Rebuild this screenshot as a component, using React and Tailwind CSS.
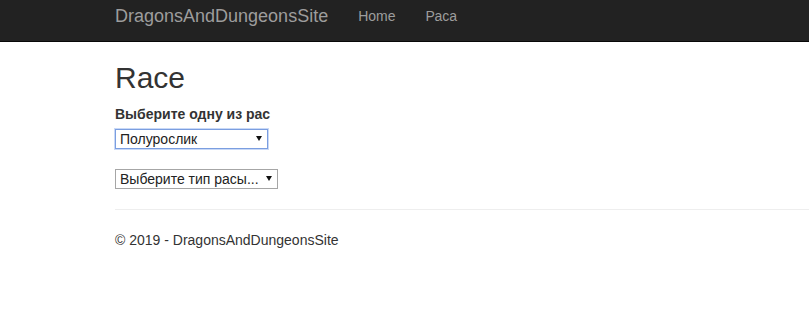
import React from "react";

function Select({ width, focused, children }) {
  return (
    <div className={`relative ${width} h-[20px]`}>
      <select
        className={`appearance-none block w-full h-[20px] bg-white pl-[4px] pr-[16px] py-0 text-[14px] leading-[18px] text-[#222] rounded-none outline-none border ${
          focused
            ? "border-[#7b9ee0] shadow-[0_0_0_1px_#c9d9f7]"
            : "border-[#a6a6a6]"
        }`}
        defaultValue="0"
        style={{ fontFamily: '"Liberation Sans", Arial, sans-serif' }}
      >
        {children}
      </select>
      <div className="pointer-events-none absolute right-[6px] top-[7px] w-0 h-0 border-l-[3px] border-r-[3px] border-t-[5px] border-l-transparent border-r-transparent border-t-[#111]" />
    </div>
  );
}

export default function App() {
  return (
    <div
      className="w-full min-h-[320px] bg-white text-[#333] text-[14px] leading-[20px]"
      style={{ fontFamily: '"Liberation Sans", Arial, sans-serif' }}
    >
      <nav className="h-[42px] bg-[#222] border-b border-[#080808]">
        <div className="pl-[115px] pt-[6px] flex items-start">
          <a className="text-[18px] leading-[20px] text-[#9d9d9d]" href="#">
            DragonsAndDungeonsSite
          </a>
          <ul className="flex ml-[30px] gap-[30px]">
            <li>
              <a className="text-[14px] leading-[20px] text-[#9d9d9d]" href="#">
                Home
              </a>
            </li>
            <li>
              <a className="text-[14px] leading-[20px] text-[#9d9d9d]" href="#">
                Раса
              </a>
            </li>
          </ul>
        </div>
      </nav>

      <main className="pl-[115px]">
        <h2 className="mt-[19px] mb-[10px] text-[30px] leading-[33px] font-normal text-[#333]">
          Race
        </h2>
        <label className="block font-bold mb-[5px]">Выберите одну из рас</label>
        <Select width="w-[153px]" focused>
          <option value="0">Полурослик</option>
          <option value="1">Человек</option>
          <option value="2">Эльф</option>
          <option value="3">Дварф</option>
        </Select>
        <div className="h-[20px]" />
        <Select width="w-[163px]">
          <option value="0">Выберите тип расы...</option>
        </Select>
        <hr className="mt-[20px] mb-[20px] border-0 border-t border-[#eee]" />
        <footer>
          <p>© 2019 - DragonsAndDungeonsSite</p>
        </footer>
      </main>
    </div>
  );
}
